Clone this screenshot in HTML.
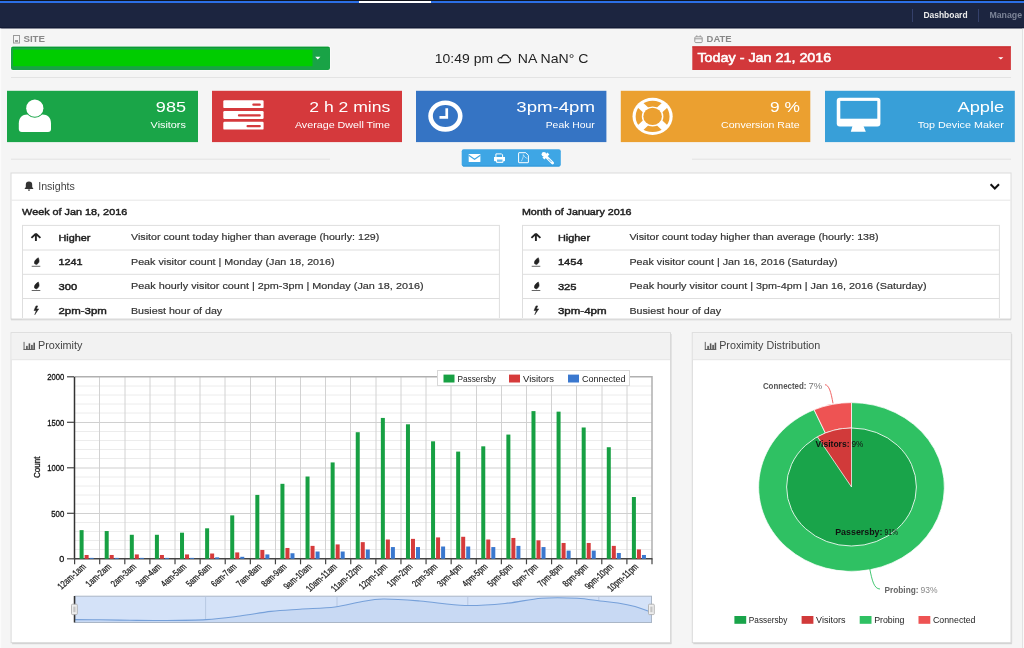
<!DOCTYPE html>
<html><head><meta charset="utf-8"><title>Dashboard</title>
<style>html,body{margin:0;padding:0;width:1024px;height:648px;overflow:hidden;background:#f5f5f5}
svg{display:block;font-family:"Liberation Sans", sans-serif;will-change:transform}</style></head>
<body><svg width="1024" height="648" viewBox="0 0 1024 648" shape-rendering="geometricPrecision">
<rect x="0.00" y="0.00" width="1024.00" height="28.60" fill="#1c2540" />
<rect x="0.00" y="0.00" width="1024.00" height="1.00" fill="#11151f" />
<rect x="0.00" y="1.00" width="1024.00" height="2.00" fill="#2b6fe6" />
<rect x="359.00" y="1.00" width="72.00" height="2.00" fill="#ffffff" />
<rect x="0.00" y="27.20" width="1024.00" height="1.40" fill="#121a33" />
<line x1="912.5" y1="9" x2="912.5" y2="22" stroke="#34406a" stroke-width="1"/>
<line x1="978.5" y1="9" x2="978.5" y2="22" stroke="#34406a" stroke-width="1"/>
<text x="923.42" y="18.20" font-size="9.70" font-weight="700" fill="#ececec" textLength="44.16" lengthAdjust="spacingAndGlyphs" >Dashboard</text>
<text x="989.42" y="18.20" font-size="9.70" font-weight="700" fill="#7b8396" textLength="32.66" lengthAdjust="spacingAndGlyphs" >Manage</text>
<rect x="0.00" y="28.60" width="1024.00" height="619.40" fill="#f5f5f5" />
<line x1="1022.5" y1="28.6" x2="1022.5" y2="648" stroke="#e2e2e2" stroke-width="1"/>
<rect x="0.00" y="28.60" width="1.20" height="619.40" fill="#fbfbfb" />
<rect x="1023.00" y="28.60" width="1.00" height="619.40" fill="#fafafa" />
<g fill="none" stroke="#9a9a9a" stroke-width="1"><rect x="13.5" y="35.5" width="6" height="7.5"/></g>
<rect x="15.00" y="40.00" width="3.00" height="2.00" fill="#9a9a9a" />
<text x="23.44" y="42.30" font-size="9.30" font-weight="700" fill="#888" textLength="21.62" lengthAdjust="spacingAndGlyphs" >SITE</text>
<rect x="10.30" y="46.20" width="320.40" height="24.60" fill="#fcfcfc" rx="2.5"/>
<rect x="11.00" y="46.80" width="319.00" height="23.30" fill="#19a346" rx="2"/>
<rect x="11.50" y="46.80" width="318.00" height="1.20" fill="#0b9a33" rx="1"/>
<rect x="13.00" y="49.50" width="299.50" height="16.70" fill="#00cc00" />
<path d="M315.2,56.8 L320.4,56.8 L317.8,59.6 Z" fill="#fff"/>
<text x="434.87" y="63.00" font-size="12.20" font-weight="400" fill="#222" textLength="58.16" lengthAdjust="spacingAndGlyphs" >10:49 pm</text>
<path d="M499.5,62.6 H508.2 A2.6,2.6 0 0 0 508.6,57.5 A3.6,3.6 0 0 0 501.6,57.9 A2.4,2.4 0 0 0 499.5,62.6 Z" fill="none" stroke="#222" stroke-width="1.1"/>
<text x="517.87" y="63.00" font-size="12.20" font-weight="400" fill="#222" textLength="70.46" lengthAdjust="spacingAndGlyphs" >NA NaN° C</text>
<g fill="none" stroke="#9a9a9a" stroke-width="1"><rect x="694.8" y="36.8" width="7.4" height="5.8" rx="1"/><line x1="694.8" y1="38.8" x2="702.2" y2="38.8"/><line x1="696.8" y1="35.3" x2="696.8" y2="37"/><line x1="700.2" y1="35.3" x2="700.2" y2="37"/></g>
<text x="706.58" y="42.10" font-size="8.60" font-weight="700" fill="#888" textLength="25.03" lengthAdjust="spacingAndGlyphs" >DATE</text>
<rect x="692.30" y="46.40" width="318.60" height="23.60" fill="#d2383b" />
<rect x="692.30" y="46.40" width="318.60" height="1.00" fill="#c82b2e" />
<text x="697.41" y="61.90" font-size="13.10" font-weight="400" fill="#fff" textLength="133.87" lengthAdjust="spacingAndGlyphs" stroke="#fff" stroke-width="0.55">Today - Jan 21, 2016</text>
<path d="M998.2,57.2 L1003.4,57.2 L1000.8,59.6 Z" fill="#fff"/>
<line x1="11" y1="77.5" x2="1011" y2="77.5" stroke="#e3e3e3" stroke-width="1"/>
<rect x="7.00" y="90.80" width="191.00" height="51.30" fill="#1aa548" />
<rect x="212.00" y="90.80" width="190.00" height="51.30" fill="#d5393c" />
<rect x="416.00" y="90.80" width="190.40" height="51.30" fill="#3574c4" />
<rect x="620.80" y="90.80" width="189.50" height="51.30" fill="#eba030" />
<rect x="825.00" y="90.80" width="189.80" height="51.30" fill="#389fd8" />
<text x="155.88" y="112.20" font-size="15.40" font-weight="400" fill="#fff" textLength="30.15" lengthAdjust="spacingAndGlyphs" >985</text>
<text x="150.61" y="128.20" font-size="9.80" font-weight="400" fill="#fff" textLength="35.28" lengthAdjust="spacingAndGlyphs" >Visitors</text>
<text x="309.28" y="111.70" font-size="15.40" font-weight="400" fill="#fff" textLength="81.05" lengthAdjust="spacingAndGlyphs" >2 h 2 mins</text>
<text x="294.91" y="128.20" font-size="9.80" font-weight="400" fill="#fff" textLength="95.08" lengthAdjust="spacingAndGlyphs" >Average Dwell Time</text>
<text x="516.28" y="112.00" font-size="15.40" font-weight="400" fill="#fff" textLength="78.75" lengthAdjust="spacingAndGlyphs" >3pm-4pm</text>
<text x="545.71" y="128.20" font-size="9.80" font-weight="400" fill="#fff" textLength="48.98" lengthAdjust="spacingAndGlyphs" >Peak Hour</text>
<text x="770.08" y="112.20" font-size="15.40" font-weight="400" fill="#fff" textLength="29.85" lengthAdjust="spacingAndGlyphs" >9 %</text>
<text x="721.11" y="128.20" font-size="9.80" font-weight="400" fill="#fff" textLength="78.48" lengthAdjust="spacingAndGlyphs" >Conversion Rate</text>
<text x="957.48" y="112.00" font-size="15.40" font-weight="400" fill="#fff" textLength="46.75" lengthAdjust="spacingAndGlyphs" >Apple</text>
<text x="917.71" y="128.20" font-size="9.80" font-weight="400" fill="#fff" textLength="86.18" lengthAdjust="spacingAndGlyphs" >Top Device Maker</text>
<path d="M18.8,128.9 Q18.8,131.9 21.8,131.9 H48 Q51,131.9 51,128.9 V123.5 C51,117.8 47.5,114.6 42.5,114.6 H27.3 C22.3,114.6 18.8,117.8 18.8,123.5 Z" fill="#fff"/>
<circle cx="34.8" cy="108.2" r="9.5" fill="#1aa548"/>
<circle cx="34.8" cy="108.2" r="8.6" fill="#fff"/>
<rect x="223.30" y="100.20" width="40.30" height="7.90" fill="#fff" rx="1.2"/>
<rect x="252.30" y="103.40" width="8.50" height="2.30" fill="#d5393c" rx="1"/>
<rect x="223.30" y="111.00" width="40.30" height="7.90" fill="#fff" rx="1.2"/>
<rect x="237.90" y="114.20" width="22.90" height="2.30" fill="#d5393c" rx="1"/>
<rect x="223.30" y="121.70" width="40.30" height="7.90" fill="#fff" rx="1.2"/>
<rect x="246.50" y="124.90" width="14.30" height="2.30" fill="#d5393c" rx="1"/>
<ellipse cx="445.4" cy="116.05" rx="14.85" ry="13.35" fill="none" stroke="#fff" stroke-width="4.6"/>
<path d="M446.75,108.3 V117.45 H439.5" fill="none" stroke="#fff" stroke-width="2.7"/>
<g transform="translate(652.6,116.4) scale(1.08,1)">
<circle r="18.6" fill="#fff"/>
<circle r="12.85" fill="none" stroke="#eba030" stroke-width="5.7"/>
<rect x="-3.5" y="-17" width="7" height="34" fill="#fff" transform="rotate(45)"/>
<rect x="-3.5" y="-17" width="7" height="34" fill="#fff" transform="rotate(-45)"/>
<circle r="8.6" fill="#eba030"/>
</g>
<rect x="836.75" y="97.80" width="43.65" height="28.60" fill="#fff" rx="3"/>
<rect x="840.30" y="100.90" width="37.00" height="17.80" fill="#389fd8" />
<path d="M852.5,126 L863.5,126 L865.8,131.8 L850.8,131.8 Z" fill="#fff"/>
<rect x="461.70" y="149.20" width="99.10" height="17.40" fill="#3ea6e5" rx="2"/>
<rect x="463.00" y="165.60" width="96.50" height="0.90" fill="#2f95d6" />
<rect x="468.7" y="153.9" width="11.7" height="8.2" rx="0.6" fill="#fff"/>
<path d="M468.7,155.2 L474.55,159.3 L480.4,155.2" fill="none" stroke="#3ea6e5" stroke-width="1.1"/>
<path d="M495.9,157.2 V153.9 H501.6 L502.6,154.9 V157.2" fill="none" stroke="#fff" stroke-width="1"/>
<path d="M494,157.1 H505 V160.4 Q505,161.2 504.2,161.2 H494.8 Q494,161.2 494,160.4 Z" fill="#fff"/>
<path d="M496.6,160.2 V162.4 H502.9 V160.2" fill="none" stroke="#fff" stroke-width="1"/>
<rect x="497" y="159.6" width="5.5" height="1.2" fill="#3ea6e5"/>
<path d="M519,152.7 H525.8 L528.4,155.3 V162.3 Q528.4,162.7 528,162.7 H519 Q518.6,162.7 518.6,162.3 V153.1 Q518.6,152.7 519,152.7 Z" fill="none" stroke="#fff" stroke-width="1"/>
<path d="M521.3,161.3 C522.5,159 523.6,157 523.3,154.6 C524.2,156.5 525.5,158 527.3,158.4" fill="none" stroke="#d6ecfa" stroke-width="0.7"/>
<circle cx="543.9" cy="154.3" r="2.3" fill="#fff"/>
<path d="M543.4,158.6 L548.4,153.6" stroke="#fff" stroke-width="2.8"/>
<path d="M546.8,157.2 L552.6,163" stroke="#fff" stroke-width="2.8" stroke-linecap="round"/>
<path d="M548.3,158.8 L551.6,162.1" stroke="#3ea6e5" stroke-width="0.9"/>
<line x1="11" y1="159.2" x2="330" y2="159.2" stroke="#e3e3e3" stroke-width="1"/>
<line x1="692" y1="159.2" x2="1011" y2="159.2" stroke="#e3e3e3" stroke-width="1"/>
<rect x="11.00" y="173.00" width="1000.00" height="146.00" fill="#fff" stroke="#dcdcdc" stroke-width="1"/>
<rect x="11" y="318.5" width="1000" height="1.5" fill="#d0d0d0"/>
<line x1="11.5" y1="200.2" x2="1010.5" y2="200.2" stroke="#e6e6e6" stroke-width="1"/>
<path d="M24.5,189 H33.5 L32.2,187 V184.8 A3.2,3.2 0 0 0 25.8,184.8 V187 Z M27.8,189.5 A1.2,1.2 0 0 0 30.2,189.5 Z" fill="#333"/>
<text x="38.18" y="189.50" font-size="10.40" font-weight="400" fill="#444" textLength="36.65" lengthAdjust="spacingAndGlyphs" >Insights</text>
<path d="M990.6,184.3 L994.8,188.5 L999,184.3" fill="none" stroke="#111" stroke-width="2"/>
<text x="22.11" y="214.90" font-size="9.80" font-weight="400" fill="#222" textLength="105.08" lengthAdjust="spacingAndGlyphs" stroke="#222" stroke-width="0.45">Week of Jan 18, 2016</text>
<text x="521.91" y="214.90" font-size="9.80" font-weight="400" fill="#222" textLength="109.68" lengthAdjust="spacingAndGlyphs" stroke="#222" stroke-width="0.45">Month of January 2016</text>
<rect x="22.50" y="225.40" width="476.90" height="94.00" fill="#fff" stroke="#dedede" stroke-width="1"/>
<line x1="22.5" y1="250" x2="499.4" y2="250" stroke="#dedede" stroke-width="1"/>
<line x1="22.5" y1="274.3" x2="499.4" y2="274.3" stroke="#dedede" stroke-width="1"/>
<line x1="22.5" y1="298.5" x2="499.4" y2="298.5" stroke="#dedede" stroke-width="1"/>
<text x="58.42" y="240.60" font-size="9.60" font-weight="400" fill="#222" textLength="31.95" lengthAdjust="spacingAndGlyphs" stroke="#222" stroke-width="0.45">Higher</text>
<text x="131.02" y="240.40" font-size="9.70" font-weight="400" fill="#333" textLength="248.31" lengthAdjust="spacingAndGlyphs" stroke="#333" stroke-width="0.18">Visitor count today higher than average (hourly: 129)</text>
<path d="M35.9,233.8 L40.4,237.9 M35.9,233.8 L31.4,237.9 M35.9,234.4 V241.0" fill="none" stroke="#222" stroke-width="1.9"/>
<text x="58.42" y="265.20" font-size="9.60" font-weight="400" fill="#222" textLength="24.15" lengthAdjust="spacingAndGlyphs" stroke="#222" stroke-width="0.45">1241</text>
<text x="131.02" y="265.00" font-size="9.70" font-weight="400" fill="#333" textLength="203.56" lengthAdjust="spacingAndGlyphs" stroke="#333" stroke-width="0.18">Peak visitor count | Monday (Jan 18, 2016)</text>
<path d="M38.3,257.8 C36.5,259 34.0,260.5 34.5,263.6 L36.3,264.6 C39.5,263 39.5,261 38.3,257.8 Z" fill="#222" stroke="#222" stroke-width="0.6"/>
<rect x="31.7" y="265.8" width="8.6" height="0.9" fill="#555"/>
<text x="58.42" y="289.50" font-size="9.60" font-weight="400" fill="#222" textLength="18.75" lengthAdjust="spacingAndGlyphs" stroke="#222" stroke-width="0.45">300</text>
<text x="131.02" y="289.30" font-size="9.70" font-weight="400" fill="#333" textLength="292.56" lengthAdjust="spacingAndGlyphs" stroke="#333" stroke-width="0.18">Peak hourly visitor count | 2pm-3pm | Monday (Jan 18, 2016)</text>
<path d="M38.3,282.1 C36.5,283.3 34.0,284.8 34.5,287.90000000000003 L36.3,288.90000000000003 C39.5,287.3 39.5,285.3 38.3,282.1 Z" fill="#222" stroke="#222" stroke-width="0.6"/>
<rect x="31.7" y="290.1" width="8.6" height="0.9" fill="#555"/>
<text x="58.42" y="313.70" font-size="9.60" font-weight="400" fill="#222" textLength="48.40" lengthAdjust="spacingAndGlyphs" stroke="#222" stroke-width="0.45">2pm-3pm</text>
<text x="131.02" y="313.50" font-size="9.70" font-weight="400" fill="#333" textLength="91.16" lengthAdjust="spacingAndGlyphs" stroke="#333" stroke-width="0.18">Busiest hour of day</text>
<path d="M36.0,305.9 L34.0,310.5 L36.3,310.5 L34.8,314.7 L38.7,308.9 L36.4,308.9 L37.7,305.9 Z" fill="#222" stroke="#222" stroke-width="0.5" stroke-linejoin="round"/>
<rect x="522.50" y="225.40" width="476.90" height="94.00" fill="#fff" stroke="#dedede" stroke-width="1"/>
<line x1="522.5" y1="250" x2="999.4" y2="250" stroke="#dedede" stroke-width="1"/>
<line x1="522.5" y1="274.3" x2="999.4" y2="274.3" stroke="#dedede" stroke-width="1"/>
<line x1="522.5" y1="298.5" x2="999.4" y2="298.5" stroke="#dedede" stroke-width="1"/>
<text x="557.92" y="240.60" font-size="9.60" font-weight="400" fill="#222" textLength="32.15" lengthAdjust="spacingAndGlyphs" stroke="#222" stroke-width="0.45">Higher</text>
<text x="629.42" y="240.40" font-size="9.70" font-weight="400" fill="#333" textLength="249.16" lengthAdjust="spacingAndGlyphs" stroke="#333" stroke-width="0.18">Visitor count today higher than average (hourly: 138)</text>
<path d="M535.9,233.8 L540.4,237.9 M535.9,233.8 L531.4,237.9 M535.9,234.4 V241.0" fill="none" stroke="#222" stroke-width="1.9"/>
<text x="557.92" y="265.20" font-size="9.60" font-weight="400" fill="#222" textLength="24.65" lengthAdjust="spacingAndGlyphs" stroke="#222" stroke-width="0.45">1454</text>
<text x="629.42" y="265.00" font-size="9.70" font-weight="400" fill="#333" textLength="208.16" lengthAdjust="spacingAndGlyphs" stroke="#333" stroke-width="0.18">Peak visitor count | Jan 16, 2016 (Saturday)</text>
<path d="M538.3,257.8 C536.5,259 534.0,260.5 534.5,263.6 L536.3,264.6 C539.5,263 539.5,261 538.3,257.8 Z" fill="#222" stroke="#222" stroke-width="0.6"/>
<rect x="531.7" y="265.8" width="8.6" height="0.9" fill="#555"/>
<text x="557.92" y="289.50" font-size="9.60" font-weight="400" fill="#222" textLength="18.65" lengthAdjust="spacingAndGlyphs" stroke="#222" stroke-width="0.45">325</text>
<text x="629.42" y="289.30" font-size="9.70" font-weight="400" fill="#333" textLength="297.16" lengthAdjust="spacingAndGlyphs" stroke="#333" stroke-width="0.18">Peak hourly visitor count | 3pm-4pm | Jan 16, 2016 (Saturday)</text>
<path d="M538.3,282.1 C536.5,283.3 534.0,284.8 534.5,287.90000000000003 L536.3,288.90000000000003 C539.5,287.3 539.5,285.3 538.3,282.1 Z" fill="#222" stroke="#222" stroke-width="0.6"/>
<rect x="531.7" y="290.1" width="8.6" height="0.9" fill="#555"/>
<text x="557.92" y="313.70" font-size="9.60" font-weight="400" fill="#222" textLength="48.65" lengthAdjust="spacingAndGlyphs" stroke="#222" stroke-width="0.45">3pm-4pm</text>
<text x="629.42" y="313.50" font-size="9.70" font-weight="400" fill="#333" textLength="91.66" lengthAdjust="spacingAndGlyphs" stroke="#333" stroke-width="0.18">Busiest hour of day</text>
<path d="M536.0,305.9 L534.0,310.5 L536.3,310.5 L534.8,314.7 L538.7,308.9 L536.4,308.9 L537.7,305.9 Z" fill="#222" stroke="#222" stroke-width="0.5" stroke-linejoin="round"/>
<rect x="11.50" y="318.30" width="999.00" height="0.01" fill="#fff" />
<rect x="11.50" y="318.00" width="999.00" height="1.00" fill="#ffffff" />
<rect x="11" y="318.6" width="1000" height="1" fill="#cfcfcf"/>
<rect x="11" y="319.6" width="1000" height="1" fill="#e4e4e4"/>
<rect x="12.10" y="642.40" width="659.40" height="1.80" fill="#d3d3d3" />
<rect x="670.50" y="334.00" width="1.20" height="309.50" fill="#dcdcdc" />
<rect x="11.10" y="332.70" width="659.40" height="310.00" fill="#fff" stroke="#d9d9d9" stroke-width="1"/>
<rect x="11.60" y="333.20" width="658.40" height="26.50" fill="#f2f2f2" />
<line x1="11.6" y1="359.7" x2="670.0" y2="359.7" stroke="#e4e4e4" stroke-width="1"/>
<g fill="#555" transform="translate(0,0.9)"><rect x="23.6" y="341" width="0.9" height="8"/><rect x="23.6" y="348.2" width="11.5" height="0.9"/><rect x="26.1" y="345" width="1.6" height="3.2"/><rect x="28.6" y="342.5" width="1.6" height="5.7"/><rect x="31.1" y="344" width="1.6" height="4.2"/><rect x="33.400000000000006" y="341.8" width="1.6" height="6.4"/></g>
<text x="37.96" y="349.00" font-size="10.60" font-weight="400" fill="#444" textLength="44.47" lengthAdjust="spacingAndGlyphs" >Proximity</text>
<rect x="693.30" y="642.40" width="318.70" height="1.80" fill="#d3d3d3" />
<rect x="1011.00" y="334.00" width="1.20" height="309.50" fill="#dcdcdc" />
<rect x="692.30" y="332.70" width="318.70" height="310.00" fill="#fff" stroke="#d9d9d9" stroke-width="1"/>
<rect x="692.80" y="333.20" width="317.70" height="26.50" fill="#f2f2f2" />
<line x1="692.8" y1="359.7" x2="1010.5" y2="359.7" stroke="#e4e4e4" stroke-width="1"/>
<g fill="#555" transform="translate(0,0.9)"><rect x="704.8" y="341" width="0.9" height="8"/><rect x="704.8" y="348.2" width="11.5" height="0.9"/><rect x="707.3" y="345" width="1.6" height="3.2"/><rect x="709.8" y="342.5" width="1.6" height="5.7"/><rect x="712.3" y="344" width="1.6" height="4.2"/><rect x="714.5999999999999" y="341.8" width="1.6" height="6.4"/></g>
<text x="719.16" y="349.00" font-size="10.60" font-weight="400" fill="#444" textLength="101.17" lengthAdjust="spacingAndGlyphs" >Proximity Distribution</text>
<rect x="74.6" y="376.8" width="577.4" height="181.99999999999994" fill="#fff"/>
<line x1="74.6" y1="549.5" x2="652" y2="549.5" stroke="#ececec" stroke-width="1"/>
<line x1="74.6" y1="540.5" x2="652" y2="540.5" stroke="#ececec" stroke-width="1"/>
<line x1="74.6" y1="531.5" x2="652" y2="531.5" stroke="#ececec" stroke-width="1"/>
<line x1="74.6" y1="522.5" x2="652" y2="522.5" stroke="#ececec" stroke-width="1"/>
<line x1="74.6" y1="504.0" x2="652" y2="504.0" stroke="#ececec" stroke-width="1"/>
<line x1="74.6" y1="495.0" x2="652" y2="495.0" stroke="#ececec" stroke-width="1"/>
<line x1="74.6" y1="486.0" x2="652" y2="486.0" stroke="#ececec" stroke-width="1"/>
<line x1="74.6" y1="477.0" x2="652" y2="477.0" stroke="#ececec" stroke-width="1"/>
<line x1="74.6" y1="458.5" x2="652" y2="458.5" stroke="#ececec" stroke-width="1"/>
<line x1="74.6" y1="449.5" x2="652" y2="449.5" stroke="#ececec" stroke-width="1"/>
<line x1="74.6" y1="440.5" x2="652" y2="440.5" stroke="#ececec" stroke-width="1"/>
<line x1="74.6" y1="431.5" x2="652" y2="431.5" stroke="#ececec" stroke-width="1"/>
<line x1="74.6" y1="413.0" x2="652" y2="413.0" stroke="#ececec" stroke-width="1"/>
<line x1="74.6" y1="404.0" x2="652" y2="404.0" stroke="#ececec" stroke-width="1"/>
<line x1="74.6" y1="395.0" x2="652" y2="395.0" stroke="#ececec" stroke-width="1"/>
<line x1="74.6" y1="386.0" x2="652" y2="386.0" stroke="#ececec" stroke-width="1"/>
<line x1="99.5" y1="376.8" x2="99.5" y2="558.8" stroke="#d2d2d2" stroke-width="1"/>
<line x1="125.0" y1="376.8" x2="125.0" y2="558.8" stroke="#d2d2d2" stroke-width="1"/>
<line x1="150.0" y1="376.8" x2="150.0" y2="558.8" stroke="#d2d2d2" stroke-width="1"/>
<line x1="175.0" y1="376.8" x2="175.0" y2="558.8" stroke="#d2d2d2" stroke-width="1"/>
<line x1="200.0" y1="376.8" x2="200.0" y2="558.8" stroke="#d2d2d2" stroke-width="1"/>
<line x1="225.0" y1="376.8" x2="225.0" y2="558.8" stroke="#d2d2d2" stroke-width="1"/>
<line x1="250.5" y1="376.8" x2="250.5" y2="558.8" stroke="#d2d2d2" stroke-width="1"/>
<line x1="275.5" y1="376.8" x2="275.5" y2="558.8" stroke="#d2d2d2" stroke-width="1"/>
<line x1="300.5" y1="376.8" x2="300.5" y2="558.8" stroke="#d2d2d2" stroke-width="1"/>
<line x1="325.5" y1="376.8" x2="325.5" y2="558.8" stroke="#d2d2d2" stroke-width="1"/>
<line x1="350.5" y1="376.8" x2="350.5" y2="558.8" stroke="#d2d2d2" stroke-width="1"/>
<line x1="376.0" y1="376.8" x2="376.0" y2="558.8" stroke="#d2d2d2" stroke-width="1"/>
<line x1="401.0" y1="376.8" x2="401.0" y2="558.8" stroke="#d2d2d2" stroke-width="1"/>
<line x1="426.0" y1="376.8" x2="426.0" y2="558.8" stroke="#d2d2d2" stroke-width="1"/>
<line x1="451.0" y1="376.8" x2="451.0" y2="558.8" stroke="#d2d2d2" stroke-width="1"/>
<line x1="476.5" y1="376.8" x2="476.5" y2="558.8" stroke="#d2d2d2" stroke-width="1"/>
<line x1="501.5" y1="376.8" x2="501.5" y2="558.8" stroke="#d2d2d2" stroke-width="1"/>
<line x1="526.5" y1="376.8" x2="526.5" y2="558.8" stroke="#d2d2d2" stroke-width="1"/>
<line x1="551.5" y1="376.8" x2="551.5" y2="558.8" stroke="#d2d2d2" stroke-width="1"/>
<line x1="576.5" y1="376.8" x2="576.5" y2="558.8" stroke="#d2d2d2" stroke-width="1"/>
<line x1="602.0" y1="376.8" x2="602.0" y2="558.8" stroke="#d2d2d2" stroke-width="1"/>
<line x1="627.0" y1="376.8" x2="627.0" y2="558.8" stroke="#d2d2d2" stroke-width="1"/>
<line x1="74.6" y1="513.5" x2="652" y2="513.5" stroke="#d0d0d0" stroke-width="1.2"/>
<line x1="74.6" y1="468.0" x2="652" y2="468.0" stroke="#d0d0d0" stroke-width="1.2"/>
<line x1="74.6" y1="422.5" x2="652" y2="422.5" stroke="#d0d0d0" stroke-width="1.2"/>
<path d="M74.6,376.8 H652 V558.8" fill="none" stroke="#b0b0b0" stroke-width="1.5"/>
<line x1="74.5" y1="376.8" x2="74.5" y2="559.3" stroke="#333" stroke-width="1.5"/>
<line x1="74" y1="558.8" x2="652.5" y2="558.8" stroke="#444" stroke-width="1.5"/>
<line x1="67" y1="558.8" x2="74" y2="558.8" stroke="#444" stroke-width="1.2"/>
<text x="59.27" y="562.20" font-size="8.80" font-weight="400" fill="#111" textLength="5.06" lengthAdjust="spacingAndGlyphs" stroke="#111" stroke-width="0.3">0</text>
<line x1="67" y1="513.3" x2="74" y2="513.3" stroke="#444" stroke-width="1.2"/>
<text x="51.27" y="516.70" font-size="8.80" font-weight="400" fill="#111" textLength="13.06" lengthAdjust="spacingAndGlyphs" stroke="#111" stroke-width="0.3">500</text>
<line x1="67" y1="467.79999999999995" x2="74" y2="467.79999999999995" stroke="#444" stroke-width="1.2"/>
<text x="47.27" y="471.20" font-size="8.80" font-weight="400" fill="#111" textLength="17.06" lengthAdjust="spacingAndGlyphs" stroke="#111" stroke-width="0.3">1000</text>
<line x1="67" y1="422.3" x2="74" y2="422.3" stroke="#444" stroke-width="1.2"/>
<text x="47.27" y="425.70" font-size="8.80" font-weight="400" fill="#111" textLength="17.06" lengthAdjust="spacingAndGlyphs" stroke="#111" stroke-width="0.3">1500</text>
<line x1="67" y1="376.8" x2="74" y2="376.8" stroke="#444" stroke-width="1.2"/>
<text x="47.27" y="380.20" font-size="8.80" font-weight="400" fill="#111" textLength="17.06" lengthAdjust="spacingAndGlyphs" stroke="#111" stroke-width="0.3">2000</text>
<line x1="74.6" y1="558.8" x2="74.6" y2="564.3" stroke="#444" stroke-width="1.2"/>
<line x1="99.70434782608694" y1="558.8" x2="99.70434782608694" y2="564.3" stroke="#444" stroke-width="1.2"/>
<line x1="124.8086956521739" y1="558.8" x2="124.8086956521739" y2="564.3" stroke="#444" stroke-width="1.2"/>
<line x1="149.91304347826087" y1="558.8" x2="149.91304347826087" y2="564.3" stroke="#444" stroke-width="1.2"/>
<line x1="175.01739130434783" y1="558.8" x2="175.01739130434783" y2="564.3" stroke="#444" stroke-width="1.2"/>
<line x1="200.12173913043478" y1="558.8" x2="200.12173913043478" y2="564.3" stroke="#444" stroke-width="1.2"/>
<line x1="225.22608695652173" y1="558.8" x2="225.22608695652173" y2="564.3" stroke="#444" stroke-width="1.2"/>
<line x1="250.33043478260868" y1="558.8" x2="250.33043478260868" y2="564.3" stroke="#444" stroke-width="1.2"/>
<line x1="275.4347826086956" y1="558.8" x2="275.4347826086956" y2="564.3" stroke="#444" stroke-width="1.2"/>
<line x1="300.5391304347826" y1="558.8" x2="300.5391304347826" y2="564.3" stroke="#444" stroke-width="1.2"/>
<line x1="325.64347826086953" y1="558.8" x2="325.64347826086953" y2="564.3" stroke="#444" stroke-width="1.2"/>
<line x1="350.7478260869565" y1="558.8" x2="350.7478260869565" y2="564.3" stroke="#444" stroke-width="1.2"/>
<line x1="375.85217391304343" y1="558.8" x2="375.85217391304343" y2="564.3" stroke="#444" stroke-width="1.2"/>
<line x1="400.9565217391304" y1="558.8" x2="400.9565217391304" y2="564.3" stroke="#444" stroke-width="1.2"/>
<line x1="426.06086956521733" y1="558.8" x2="426.06086956521733" y2="564.3" stroke="#444" stroke-width="1.2"/>
<line x1="451.1652173913043" y1="558.8" x2="451.1652173913043" y2="564.3" stroke="#444" stroke-width="1.2"/>
<line x1="476.26956521739123" y1="558.8" x2="476.26956521739123" y2="564.3" stroke="#444" stroke-width="1.2"/>
<line x1="501.3739130434782" y1="558.8" x2="501.3739130434782" y2="564.3" stroke="#444" stroke-width="1.2"/>
<line x1="526.4782608695651" y1="558.8" x2="526.4782608695651" y2="564.3" stroke="#444" stroke-width="1.2"/>
<line x1="551.5826086956521" y1="558.8" x2="551.5826086956521" y2="564.3" stroke="#444" stroke-width="1.2"/>
<line x1="576.686956521739" y1="558.8" x2="576.686956521739" y2="564.3" stroke="#444" stroke-width="1.2"/>
<line x1="601.7913043478261" y1="558.8" x2="601.7913043478261" y2="564.3" stroke="#444" stroke-width="1.2"/>
<line x1="626.895652173913" y1="558.8" x2="626.895652173913" y2="564.3" stroke="#444" stroke-width="1.2"/>
<line x1="652.0" y1="558.8" x2="652.0" y2="564.3" stroke="#444" stroke-width="1.2"/>
<text x="0" y="0" font-size="8.6" font-weight="400" fill="#222" stroke="#222" stroke-width="0.35" textLength="21.5" lengthAdjust="spacingAndGlyphs" transform="translate(40.2,478) rotate(-90)">Count</text>
<rect x="79.60" y="530.13" width="4.00" height="28.66" fill="#17a043" />
<rect x="84.62" y="554.98" width="4.00" height="3.82" fill="#d63b3b" />
<rect x="89.64" y="557.89" width="4.00" height="0.91" fill="#3a78cf" />
<rect x="104.70" y="531.04" width="4.00" height="27.75" fill="#17a043" />
<rect x="109.72" y="554.98" width="4.00" height="3.82" fill="#d63b3b" />
<rect x="114.74" y="557.89" width="4.00" height="0.91" fill="#3a78cf" />
<rect x="129.81" y="534.78" width="4.00" height="24.02" fill="#17a043" />
<rect x="134.83" y="554.43" width="4.00" height="4.37" fill="#d63b3b" />
<rect x="139.85" y="557.89" width="4.00" height="0.91" fill="#3a78cf" />
<rect x="154.91" y="534.78" width="4.00" height="24.02" fill="#17a043" />
<rect x="159.93" y="554.98" width="4.00" height="3.82" fill="#d63b3b" />
<rect x="164.95" y="557.89" width="4.00" height="0.91" fill="#3a78cf" />
<rect x="180.02" y="532.68" width="4.00" height="26.12" fill="#17a043" />
<rect x="185.04" y="554.43" width="4.00" height="4.37" fill="#d63b3b" />
<rect x="190.06" y="557.89" width="4.00" height="0.91" fill="#3a78cf" />
<rect x="205.12" y="528.31" width="4.00" height="30.48" fill="#17a043" />
<rect x="210.14" y="553.52" width="4.00" height="5.28" fill="#d63b3b" />
<rect x="215.16" y="557.34" width="4.00" height="1.46" fill="#3a78cf" />
<rect x="230.23" y="515.39" width="4.00" height="43.41" fill="#17a043" />
<rect x="235.25" y="552.43" width="4.00" height="6.37" fill="#d63b3b" />
<rect x="240.27" y="556.80" width="4.00" height="2.00" fill="#3a78cf" />
<rect x="255.33" y="494.92" width="4.00" height="63.88" fill="#17a043" />
<rect x="260.35" y="549.97" width="4.00" height="8.83" fill="#d63b3b" />
<rect x="265.37" y="554.43" width="4.00" height="4.37" fill="#3a78cf" />
<rect x="280.43" y="483.82" width="4.00" height="74.98" fill="#17a043" />
<rect x="285.45" y="547.97" width="4.00" height="10.83" fill="#d63b3b" />
<rect x="290.47" y="553.25" width="4.00" height="5.55" fill="#3a78cf" />
<rect x="305.54" y="476.54" width="4.00" height="82.26" fill="#17a043" />
<rect x="310.56" y="545.88" width="4.00" height="12.92" fill="#d63b3b" />
<rect x="315.58" y="551.52" width="4.00" height="7.28" fill="#3a78cf" />
<rect x="330.64" y="462.43" width="4.00" height="96.37" fill="#17a043" />
<rect x="335.66" y="544.42" width="4.00" height="14.38" fill="#d63b3b" />
<rect x="340.68" y="551.52" width="4.00" height="7.28" fill="#3a78cf" />
<rect x="355.75" y="432.22" width="4.00" height="126.58" fill="#17a043" />
<rect x="360.77" y="542.15" width="4.00" height="16.65" fill="#d63b3b" />
<rect x="365.79" y="549.52" width="4.00" height="9.28" fill="#3a78cf" />
<rect x="380.85" y="417.93" width="4.00" height="140.87" fill="#17a043" />
<rect x="385.87" y="539.51" width="4.00" height="19.29" fill="#d63b3b" />
<rect x="390.89" y="547.06" width="4.00" height="11.74" fill="#3a78cf" />
<rect x="405.96" y="424.30" width="4.00" height="134.50" fill="#17a043" />
<rect x="410.98" y="538.87" width="4.00" height="19.93" fill="#d63b3b" />
<rect x="416.00" y="547.06" width="4.00" height="11.74" fill="#3a78cf" />
<rect x="431.06" y="441.32" width="4.00" height="117.48" fill="#17a043" />
<rect x="436.08" y="537.41" width="4.00" height="21.38" fill="#d63b3b" />
<rect x="441.10" y="546.51" width="4.00" height="12.28" fill="#3a78cf" />
<rect x="456.17" y="451.60" width="4.00" height="107.20" fill="#17a043" />
<rect x="461.19" y="536.78" width="4.00" height="22.02" fill="#d63b3b" />
<rect x="466.21" y="546.51" width="4.00" height="12.28" fill="#3a78cf" />
<rect x="481.27" y="446.32" width="4.00" height="112.48" fill="#17a043" />
<rect x="486.29" y="539.51" width="4.00" height="19.29" fill="#d63b3b" />
<rect x="491.31" y="547.06" width="4.00" height="11.74" fill="#3a78cf" />
<rect x="506.37" y="434.58" width="4.00" height="124.21" fill="#17a043" />
<rect x="511.39" y="537.96" width="4.00" height="20.84" fill="#d63b3b" />
<rect x="516.41" y="545.88" width="4.00" height="12.92" fill="#3a78cf" />
<rect x="531.48" y="411.11" width="4.00" height="147.69" fill="#17a043" />
<rect x="536.50" y="540.33" width="4.00" height="18.47" fill="#d63b3b" />
<rect x="541.52" y="547.06" width="4.00" height="11.74" fill="#3a78cf" />
<rect x="556.58" y="411.65" width="4.00" height="147.15" fill="#17a043" />
<rect x="561.60" y="542.97" width="4.00" height="15.83" fill="#d63b3b" />
<rect x="566.62" y="550.61" width="4.00" height="8.19" fill="#3a78cf" />
<rect x="581.69" y="427.49" width="4.00" height="131.31" fill="#17a043" />
<rect x="586.71" y="542.97" width="4.00" height="15.83" fill="#d63b3b" />
<rect x="591.73" y="550.61" width="4.00" height="8.19" fill="#3a78cf" />
<rect x="606.79" y="447.23" width="4.00" height="111.57" fill="#17a043" />
<rect x="611.81" y="545.88" width="4.00" height="12.92" fill="#d63b3b" />
<rect x="616.83" y="552.98" width="4.00" height="5.82" fill="#3a78cf" />
<rect x="631.90" y="497.01" width="4.00" height="61.79" fill="#17a043" />
<rect x="636.92" y="549.43" width="4.00" height="9.37" fill="#d63b3b" />
<rect x="641.94" y="554.98" width="4.00" height="3.82" fill="#3a78cf" />
<text x="0" y="0" font-size="9" fill="#222" stroke="#222" stroke-width="0.25" text-anchor="end" textLength="31.77" lengthAdjust="spacingAndGlyphs" transform="translate(86.65,567.30) scale(1.12,1) rotate(-45)">12am-1am</text>
<text x="0" y="0" font-size="9" fill="#222" stroke="#222" stroke-width="0.25" text-anchor="end" textLength="28.08" lengthAdjust="spacingAndGlyphs" transform="translate(111.76,567.30) scale(1.12,1) rotate(-45)">1am-2am</text>
<text x="0" y="0" font-size="9" fill="#222" stroke="#222" stroke-width="0.25" text-anchor="end" textLength="28.08" lengthAdjust="spacingAndGlyphs" transform="translate(136.86,567.30) scale(1.12,1) rotate(-45)">2am-3am</text>
<text x="0" y="0" font-size="9" fill="#222" stroke="#222" stroke-width="0.25" text-anchor="end" textLength="28.08" lengthAdjust="spacingAndGlyphs" transform="translate(161.97,567.30) scale(1.12,1) rotate(-45)">3am-4am</text>
<text x="0" y="0" font-size="9" fill="#222" stroke="#222" stroke-width="0.25" text-anchor="end" textLength="28.08" lengthAdjust="spacingAndGlyphs" transform="translate(187.07,567.30) scale(1.12,1) rotate(-45)">4am-5am</text>
<text x="0" y="0" font-size="9" fill="#222" stroke="#222" stroke-width="0.25" text-anchor="end" textLength="28.08" lengthAdjust="spacingAndGlyphs" transform="translate(212.17,567.30) scale(1.12,1) rotate(-45)">5am-6am</text>
<text x="0" y="0" font-size="9" fill="#222" stroke="#222" stroke-width="0.25" text-anchor="end" textLength="28.08" lengthAdjust="spacingAndGlyphs" transform="translate(237.28,567.30) scale(1.12,1) rotate(-45)">6am-7am</text>
<text x="0" y="0" font-size="9" fill="#222" stroke="#222" stroke-width="0.25" text-anchor="end" textLength="28.08" lengthAdjust="spacingAndGlyphs" transform="translate(262.38,567.30) scale(1.12,1) rotate(-45)">7am-8am</text>
<text x="0" y="0" font-size="9" fill="#222" stroke="#222" stroke-width="0.25" text-anchor="end" textLength="28.08" lengthAdjust="spacingAndGlyphs" transform="translate(287.49,567.30) scale(1.12,1) rotate(-45)">8am-9am</text>
<text x="0" y="0" font-size="9" fill="#222" stroke="#222" stroke-width="0.25" text-anchor="end" textLength="31.77" lengthAdjust="spacingAndGlyphs" transform="translate(312.59,567.30) scale(1.12,1) rotate(-45)">9am-10am</text>
<text x="0" y="0" font-size="9" fill="#222" stroke="#222" stroke-width="0.25" text-anchor="end" textLength="34.98" lengthAdjust="spacingAndGlyphs" transform="translate(337.70,567.30) scale(1.12,1) rotate(-45)">10am-11am</text>
<text x="0" y="0" font-size="9" fill="#222" stroke="#222" stroke-width="0.25" text-anchor="end" textLength="34.98" lengthAdjust="spacingAndGlyphs" transform="translate(362.80,567.30) scale(1.12,1) rotate(-45)">11am-12pm</text>
<text x="0" y="0" font-size="9" fill="#222" stroke="#222" stroke-width="0.25" text-anchor="end" textLength="31.77" lengthAdjust="spacingAndGlyphs" transform="translate(387.90,567.30) scale(1.12,1) rotate(-45)">12pm-1pm</text>
<text x="0" y="0" font-size="9" fill="#222" stroke="#222" stroke-width="0.25" text-anchor="end" textLength="28.08" lengthAdjust="spacingAndGlyphs" transform="translate(413.01,567.30) scale(1.12,1) rotate(-45)">1pm-2pm</text>
<text x="0" y="0" font-size="9" fill="#222" stroke="#222" stroke-width="0.25" text-anchor="end" textLength="28.08" lengthAdjust="spacingAndGlyphs" transform="translate(438.11,567.30) scale(1.12,1) rotate(-45)">2pm-3pm</text>
<text x="0" y="0" font-size="9" fill="#222" stroke="#222" stroke-width="0.25" text-anchor="end" textLength="28.08" lengthAdjust="spacingAndGlyphs" transform="translate(463.22,567.30) scale(1.12,1) rotate(-45)">3pm-4pm</text>
<text x="0" y="0" font-size="9" fill="#222" stroke="#222" stroke-width="0.25" text-anchor="end" textLength="28.08" lengthAdjust="spacingAndGlyphs" transform="translate(488.32,567.30) scale(1.12,1) rotate(-45)">4pm-5pm</text>
<text x="0" y="0" font-size="9" fill="#222" stroke="#222" stroke-width="0.25" text-anchor="end" textLength="28.08" lengthAdjust="spacingAndGlyphs" transform="translate(513.43,567.30) scale(1.12,1) rotate(-45)">5pm-6pm</text>
<text x="0" y="0" font-size="9" fill="#222" stroke="#222" stroke-width="0.25" text-anchor="end" textLength="28.08" lengthAdjust="spacingAndGlyphs" transform="translate(538.53,567.30) scale(1.12,1) rotate(-45)">6pm-7pm</text>
<text x="0" y="0" font-size="9" fill="#222" stroke="#222" stroke-width="0.25" text-anchor="end" textLength="28.08" lengthAdjust="spacingAndGlyphs" transform="translate(563.63,567.30) scale(1.12,1) rotate(-45)">7pm-8pm</text>
<text x="0" y="0" font-size="9" fill="#222" stroke="#222" stroke-width="0.25" text-anchor="end" textLength="28.08" lengthAdjust="spacingAndGlyphs" transform="translate(588.74,567.30) scale(1.12,1) rotate(-45)">8pm-9pm</text>
<text x="0" y="0" font-size="9" fill="#222" stroke="#222" stroke-width="0.25" text-anchor="end" textLength="31.77" lengthAdjust="spacingAndGlyphs" transform="translate(613.84,567.30) scale(1.12,1) rotate(-45)">9pm-10pm</text>
<text x="0" y="0" font-size="9" fill="#222" stroke="#222" stroke-width="0.25" text-anchor="end" textLength="34.98" lengthAdjust="spacingAndGlyphs" transform="translate(638.95,567.30) scale(1.12,1) rotate(-45)">10pm-11pm</text>
<rect x="437.5" y="370.5" width="192" height="15" fill="#fff" stroke="#d8d8d8" stroke-width="1"/>
<rect x="443.50" y="374.60" width="11.00" height="7.90" fill="#17a043" />
<text x="457.48" y="381.50" font-size="8.60" font-weight="400" fill="#222" textLength="38.53" lengthAdjust="spacingAndGlyphs" >Passersby</text>
<rect x="509.00" y="374.60" width="11.00" height="7.90" fill="#d63b3b" />
<text x="522.98" y="381.50" font-size="8.60" font-weight="400" fill="#222" textLength="31.03" lengthAdjust="spacingAndGlyphs" >Visitors</text>
<rect x="568.00" y="374.60" width="11.00" height="7.90" fill="#3a78cf" />
<text x="581.98" y="381.50" font-size="8.60" font-weight="400" fill="#222" textLength="43.53" lengthAdjust="spacingAndGlyphs" >Connected</text>
<rect x="75" y="596.2" width="576.5" height="26.3" fill="#d4e2f8" stroke="#aab6c6" stroke-width="1"/>
<line x1="205.6" y1="596.7" x2="205.6" y2="622" stroke="#b8c8e2" stroke-width="1"/>
<line x1="337" y1="596.7" x2="337" y2="622" stroke="#b8c8e2" stroke-width="1"/>
<line x1="467.8" y1="596.7" x2="467.8" y2="622" stroke="#b8c8e2" stroke-width="1"/>
<line x1="598.8" y1="596.7" x2="598.8" y2="622" stroke="#b8c8e2" stroke-width="1"/>
<path d="M75,619.6 C79.17,619.63 90.83,619.68 100,619.8 C109.17,619.92 120.00,620.18 130,620.3 C140.00,620.42 147.33,620.62 160,620.5 C172.67,620.38 192.67,620.35 206,619.6 C219.33,618.85 229.17,617.37 240,616 C250.83,614.63 261.00,612.53 271,611.4 C281.00,610.27 289.33,609.93 300,609.2 C310.67,608.47 325.00,608.20 335,607 C345.00,605.80 352.00,603.33 360,602 C368.00,600.67 373.00,599.17 383,599 C393.00,598.83 406.33,599.92 420,601 C433.67,602.08 450.83,605.08 465,605.5 C479.17,605.92 492.23,604.72 505,603.5 C517.77,602.28 529.60,599.08 541.6,598.2 C553.60,597.32 567.27,597.73 577,598.2 C586.73,598.67 593.17,600.20 600,601 C606.83,601.80 612.17,602.08 618,603 C623.83,603.92 629.50,605.00 635,606.5 C640.50,608.00 648.33,611.08 651,612 V622 H75 Z" fill="#c8d9f3"/>
<path d="M75,619.6 C79.17,619.63 90.83,619.68 100,619.8 C109.17,619.92 120.00,620.18 130,620.3 C140.00,620.42 147.33,620.62 160,620.5 C172.67,620.38 192.67,620.35 206,619.6 C219.33,618.85 229.17,617.37 240,616 C250.83,614.63 261.00,612.53 271,611.4 C281.00,610.27 289.33,609.93 300,609.2 C310.67,608.47 325.00,608.20 335,607 C345.00,605.80 352.00,603.33 360,602 C368.00,600.67 373.00,599.17 383,599 C393.00,598.83 406.33,599.92 420,601 C433.67,602.08 450.83,605.08 465,605.5 C479.17,605.92 492.23,604.72 505,603.5 C517.77,602.28 529.60,599.08 541.6,598.2 C553.60,597.32 567.27,597.73 577,598.2 C586.73,598.67 593.17,600.20 600,601 C606.83,601.80 612.17,602.08 618,603 C623.83,603.92 629.50,605.00 635,606.5 C640.50,608.00 648.33,611.08 651,612" fill="none" stroke="#76a0d9" stroke-width="1.1"/>
<line x1="74.5" y1="596" x2="74.5" y2="622.5" stroke="#333" stroke-width="1.5"/>
<rect x="71.5" y="604.2" width="5.8" height="10.4" rx="1" fill="#eeeeee" stroke="#a8a8a8" stroke-width="0.8"/>
<rect x="73.3" y="606.6" width="2.2" height="5.6" fill="#c4c4c4"/>
<rect x="648.5" y="604.2" width="5.8" height="10.4" rx="1" fill="#eeeeee" stroke="#a8a8a8" stroke-width="0.8"/>
<rect x="650.3" y="606.6" width="2.2" height="5.6" fill="#c4c4c4"/>
<g transform="translate(851.5,487.0) scale(1.1,1)">
<path d="M0,0 L0.00,-84.40 A84.4,84.4 0 1 1 -34.01,-77.25 Z" fill="#2fc163" stroke="#fff" stroke-width="0.7"/>
<path d="M0,0 L-34.01,-77.25 A84.4,84.4 0 0 1 -0.00,-84.40 Z" fill="#ee5353" stroke="#fff" stroke-width="0.7"/>
<circle cx="0" cy="0" r="59" fill="#19a44a" stroke="#fff" stroke-width="0.8"/>
<path d="M0,0 L-30.99,-50.21 A59,59 0 0 1 -0.00,-59.00 Z" fill="#d13a3a" stroke="#fff" stroke-width="0.7"/>
</g>
<path d="M825,384.7 C829,385 831,392 833,403.4" fill="none" stroke="#ee5353" stroke-width="0.9"/>
<text x="762.90" y="388.50" font-size="8.40" font-weight="700" fill="#555" textLength="43.61" lengthAdjust="spacingAndGlyphs" >Connected:</text>
<text x="808.50" y="388.50" font-size="8.40" font-weight="400" fill="#777" textLength="13.71" lengthAdjust="spacingAndGlyphs" >7%</text>
<path d="M869.8,569 C872,580 874,589 880,589" fill="none" stroke="#2fc163" stroke-width="0.9"/>
<text x="884.50" y="593.00" font-size="8.40" font-weight="700" fill="#666" textLength="34.01" lengthAdjust="spacingAndGlyphs" >Probing:</text>
<text x="920.50" y="593.00" font-size="8.40" font-weight="400" fill="#888" textLength="17.01" lengthAdjust="spacingAndGlyphs" >93%</text>
<text x="815.50" y="447.00" font-size="8.40" font-weight="700" fill="#111" textLength="34.01" lengthAdjust="spacingAndGlyphs" >Visitors:</text>
<text x="851.50" y="447.00" font-size="8.40" font-weight="400" fill="#111" textLength="11.81" lengthAdjust="spacingAndGlyphs" >9%</text>
<text x="835.20" y="535.00" font-size="8.40" font-weight="700" fill="#111" textLength="47.31" lengthAdjust="spacingAndGlyphs" >Passersby:</text>
<text x="884.50" y="535.00" font-size="8.40" font-weight="400" fill="#111" textLength="13.41" lengthAdjust="spacingAndGlyphs" >91%</text>
<rect x="734.40" y="616.00" width="11.80" height="7.80" fill="#19a44a" />
<text x="748.87" y="623.30" font-size="8.80" font-weight="400" fill="#222" textLength="38.46" lengthAdjust="spacingAndGlyphs" >Passersby</text>
<rect x="801.60" y="616.00" width="11.80" height="7.80" fill="#d13a3a" />
<text x="816.07" y="623.30" font-size="8.80" font-weight="400" fill="#222" textLength="29.46" lengthAdjust="spacingAndGlyphs" >Visitors</text>
<rect x="859.70" y="616.00" width="11.80" height="7.80" fill="#2fc163" />
<text x="874.17" y="623.30" font-size="8.80" font-weight="400" fill="#222" textLength="30.36" lengthAdjust="spacingAndGlyphs" >Probing</text>
<rect x="918.50" y="616.00" width="11.80" height="7.80" fill="#ee5353" />
<text x="932.97" y="623.30" font-size="8.80" font-weight="400" fill="#222" textLength="42.56" lengthAdjust="spacingAndGlyphs" >Connected</text>
</svg></body></html>
